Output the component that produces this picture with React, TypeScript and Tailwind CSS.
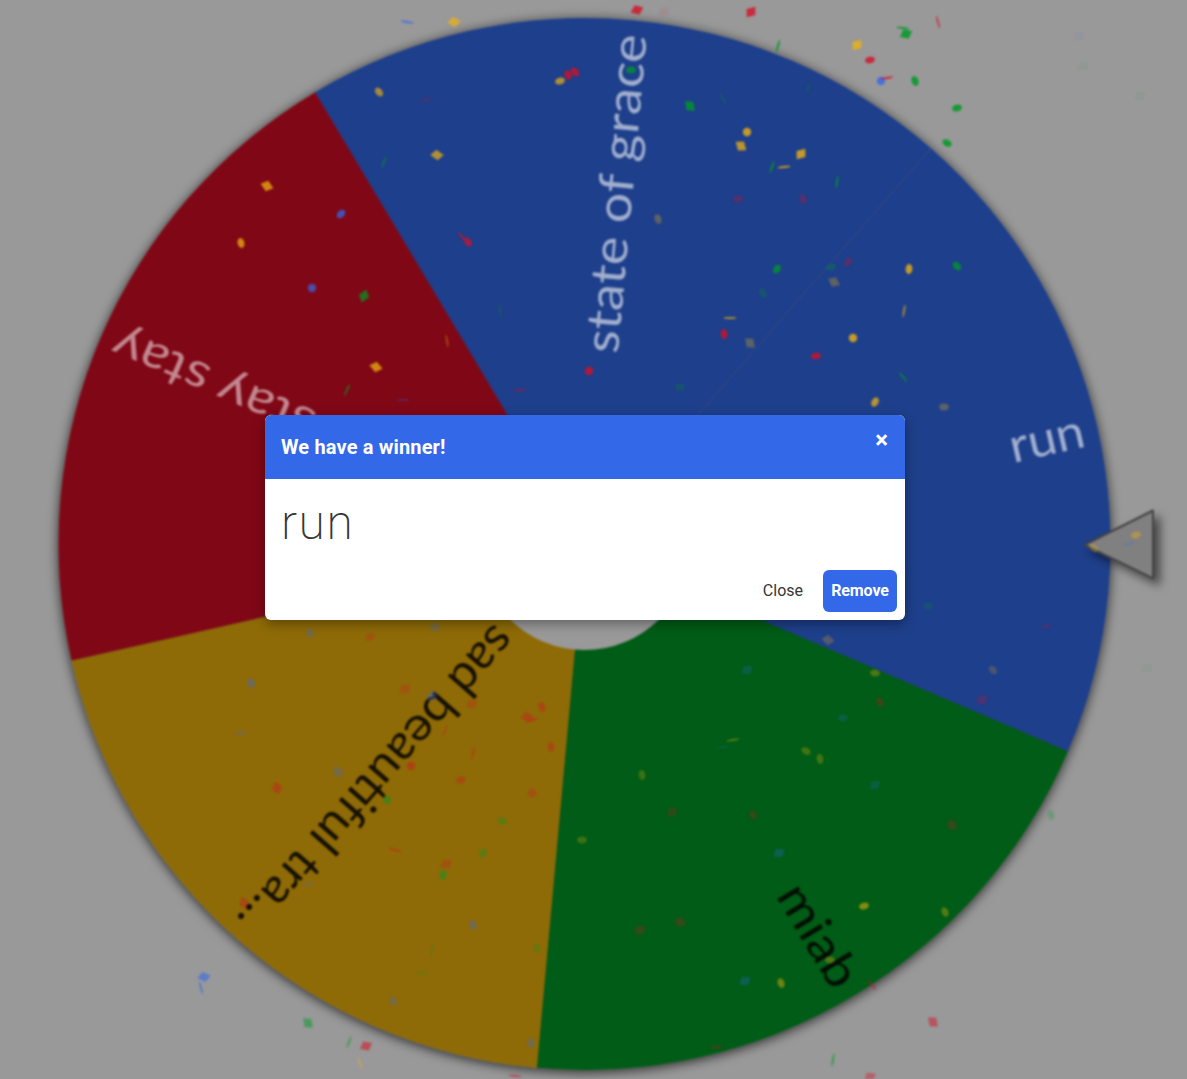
const cx = 584.5;
const cy = 544;
const R = 526;

type Slice = { from: number; color: string; ink: string; inkAlpha: number; label: string; len: number };
const slices: Slice[] = [
  { from: 23.2, color: "#009925", ink: "#000000", inkAlpha: 0.85, label: "miab", len: 112 },
  { from: 95.2, color: "#eeb211", ink: "#000000", inkAlpha: 0.85, label: "sad beautiful tra...", len: 394 },
  { from: 167.2, color: "#d50f25", ink: "#ffffff", inkAlpha: 0.52, label: "stay stay stay", len: 330 },
  { from: 239.2, color: "#3369e8", ink: "#ffffff", inkAlpha: 0.58, label: "state of grace", len: 320 },
  { from: 311.2, color: "#3369e8", ink: "#ffffff", inkAlpha: 0.58, label: "run", len: 76 },
];

function pt(a: number, r: number) {
  const t = (a * Math.PI) / 180;
  return `${(cx + r * Math.cos(t)).toFixed(2)} ${(cy + r * Math.sin(t)).toFixed(2)}`;
}

function wedge(a: number) {
  return `M${cx} ${cy}L${pt(a, R)}A${R} ${R} 0 0 1 ${pt(a + 72, R)}Z`;
}

const C: Record<string, string> = { r: "#d50f25", b: "#3369e8", y: "#eeb211", g: "#009925" };

// x, y, shape (e ellipse, c circle, s square, t thin), colour, alpha, angle
type Bit = [number, number, string, string, number, number];
const bits: Bit[] = [
  [407, 22, "t", "b", 0.8, 10], [454, 22, "s", "y", 0.7, 30], [637, 10, "s", "r", 0.8, 15], [751, 12, "s", "r", 0.8, -15],
  [664, 12, "s", "r", 0.08, 0], [778, 46, "t", "g", 0.85, -75], [857, 45, "s", "y", 0.8, -15], [870, 60, "e", "r", 0.8, -10],
  [881, 81, "c", "b", 0.8, 0], [887, 78, "t", "r", 0.85, -10], [915, 81, "e", "g", 0.85, 70], [903, 28, "t", "g", 0.85, 5],
  [906, 34, "s", "g", 0.85, 10], [938, 22, "t", "r", 0.6, 75], [957, 108, "e", "g", 0.85, -15], [947, 143, "e", "g", 0.85, 30],
  [204, 977, "s", "b", 0.6, 25], [201, 988, "t", "b", 0.6, 75], [308, 1023, "s", "g", 0.5, 80], [366, 1046, "s", "r", 0.55, 10],
  [349, 1042, "t", "g", 0.5, -70], [360, 1063, "t", "y", 0.4, 70], [933, 1022, "s", "r", 0.5, 80], [833, 1060, "t", "g", 0.6, -80],
  [872, 985, "t", "r", 0.5, 50], [515, 1076, "t", "r", 0.5, 5], [870, 1077, "s", "r", 0.4, 5], [1051, 815, "e", "g", 0.25, 80],
  [1079, 36, "s", "b", 0.07, 0], [1083, 66, "s", "g", 0.06, 0], [1140, 96, "s", "g", 0.05, 0],
  [560, 81, "e", "y", 0.7, -15], [568, 75, "e", "r", 0.8, 70], [575, 72, "e", "r", 0.8, 45], [631, 70, "e", "g", 0.75, 0],
  [690, 106, "s", "g", 0.8, 80], [723, 99, "t", "g", 0.3, 55], [808, 88, "t", "g", 0.25, -70], [747, 132, "c", "y", 0.8, 0],
  [741, 146, "s", "y", 0.75, 75], [801, 154, "s", "y", 0.8, -15], [772, 167, "t", "g", 0.8, -70], [784, 167, "t", "y", 0.8, -5],
  [837, 182, "t", "g", 0.75, -80], [738, 199, "e", "r", 0.3, 0], [803, 199, "e", "r", 0.3, 70], [658, 219, "e", "y", 0.3, 70],
  [777, 269, "e", "g", 0.75, -55], [831, 267, "e", "g", 0.3, -15], [848, 262, "e", "r", 0.3, -60], [834, 282, "s", "y", 0.3, 65],
  [909, 269, "e", "y", 0.8, -85], [957, 266, "e", "g", 0.75, 45], [763, 293, "e", "g", 0.25, 60], [904, 311, "t", "y", 0.6, -80],
  [730, 318, "t", "y", 0.7, 0], [724, 334, "e", "r", 0.8, 85], [750, 343, "s", "y", 0.3, 80], [853, 338, "c", "y", 0.8, 0],
  [816, 356, "e", "r", 0.8, -10], [589, 371, "c", "r", 0.8, 0], [903, 377, "t", "g", 0.65, 50], [875, 402, "e", "y", 0.75, -60],
  [944, 407, "e", "y", 0.3, 0], [680, 387, "e", "g", 0.25, 0], [500, 310, "t", "g", 0.3, 80],
  [379, 92, "e", "y", 0.65, 50], [426, 100, "t", "r", 0.3, -15], [437, 155, "s", "y", 0.7, 35], [384, 162, "t", "g", 0.5, -70],
  [462, 237, "t", "r", 0.7, 50], [468, 242, "e", "r", 0.7, 60], [267, 186, "s", "y", 0.75, 55], [341, 214, "e", "b", 0.75, -45],
  [241, 243, "e", "y", 0.75, 75], [312, 288, "c", "b", 0.7, 0], [364, 296, "s", "g", 0.7, -35], [376, 367, "s", "y", 0.75, 50],
  [447, 341, "t", "y", 0.35, 80], [347, 390, "t", "g", 0.6, -65], [520, 390, "t", "r", 0.5, -10], [403, 400, "t", "b", 0.3, 0],
  [310, 633, "e", "b", 0.3, 75], [370, 637, "e", "r", 0.25, -20], [435, 627, "c", "b", 0.28, 0], [251, 683, "e", "b", 0.4, 65],
  [405, 689, "s", "r", 0.25, -10], [432, 696, "s", "b", 0.35, -15], [472, 704, "s", "r", 0.25, 5], [527, 717, "s", "r", 0.35, 30],
  [532, 720, "t", "r", 0.55, -15], [241, 733, "t", "b", 0.4, -3], [445, 731, "t", "r", 0.3, -65], [473, 753, "t", "r", 0.4, -80],
  [411, 766, "c", "r", 0.45, 0], [338, 772, "s", "b", 0.28, 75], [461, 780, "e", "r", 0.35, -20], [277, 788, "s", "r", 0.4, -70],
  [387, 800, "c", "g", 0.45, 0], [532, 793, "c", "r", 0.28, 0], [502, 821, "e", "g", 0.35, 15], [395, 850, "t", "r", 0.45, 15],
  [483, 853, "e", "g", 0.35, -70], [446, 864, "s", "r", 0.28, 5], [443, 875, "e", "g", 0.5, -75], [308, 884, "t", "b", 0.3, -15],
  [244, 903, "s", "r", 0.35, -75], [473, 925, "e", "b", 0.35, 65], [542, 707, "e", "r", 0.4, 70], [551, 747, "e", "r", 0.35, 80],
  [432, 950, "t", "g", 0.25, -80], [537, 948, "e", "g", 0.25, 70], [422, 973, "t", "g", 0.28, -5], [393, 1001, "e", "b", 0.28, 65],
  [531, 1043, "e", "b", 0.32, 85],
  [642, 775, "e", "y", 0.25, 80], [733, 740, "t", "y", 0.4, -10], [723, 747, "t", "b", 0.2, -5], [806, 751, "e", "y", 0.28, 30],
  [820, 759, "e", "y", 0.28, 80], [880, 702, "e", "r", 0.28, 70], [875, 673, "e", "y", 0.32, 5], [747, 670, "s", "b", 0.22, 0],
  [828, 640, "s", "y", 0.25, 45], [843, 718, "e", "b", 0.22, 0], [875, 785, "s", "b", 0.2, 0], [753, 815, "e", "r", 0.25, 60],
  [672, 812, "s", "r", 0.2, 0], [582, 840, "e", "y", 0.25, 0], [952, 825, "s", "r", 0.25, 70], [779, 853, "s", "b", 0.28, 0],
  [864, 906, "e", "y", 0.55, -15], [945, 912, "e", "y", 0.35, 65], [640, 930, "s", "r", 0.25, 0], [680, 922, "s", "r", 0.25, 60],
  [830, 960, "e", "y", 0.32, 0], [781, 983, "e", "y", 0.45, 70], [745, 981, "s", "b", 0.28, 0], [716, 1047, "t", "r", 0.4, 0],
  [993, 670, "e", "y", 0.2, 45], [1047, 626, "t", "r", 0.3, -10], [982, 700, "s", "r", 0.25, 0], [928, 606, "e", "g", 0.2, 0],
  [1147, 668, "s", "g", 0.06, 0], [1136, 535, "e", "y", 0.4, -15], [1129, 544, "t", "b", 0.3, -15], [1094, 548, "e", "y", 0.28, 40],
];

function Bit({ b }: { b: Bit }) {
  const [x, y, shape, col, alpha, rot] = b;
  const common = { fill: C[col], fillOpacity: alpha };
  const turn = `rotate(${rot} ${x} ${y})`;
  if (shape === "c") return <circle cx={x} cy={y} r={4.2} {...common} />;
  if (shape === "e") return <ellipse cx={x} cy={y} rx={5} ry={3.4} transform={turn} {...common} />;
  if (shape === "s")
    return (
      <path
        d={`M${x - 5.5} ${y + 4}L${x - 3.5} ${y - 4}L${x + 5.5} ${y - 4}L${x + 3.5} ${y + 4}Z`}
        transform={turn}
        {...common}
      />
    );
  return <ellipse cx={x} cy={y} rx={6.5} ry={1.1} transform={turn} {...common} />;
}

export default function App() {
  return (
    <div className="relative h-[1079px] w-[1187px] overflow-hidden bg-white font-['Roboto',sans-serif]">
      <svg
        className="absolute left-0 top-0 blur-[1px]"
        width={1187}
        height={1079}
        viewBox="0 0 1187 1079"
      >
        <defs>
          <filter id="rim" x="-10%" y="-10%" width="120%" height="120%">
            <feDropShadow dx="0" dy="2" stdDeviation="6" floodColor="#000" floodOpacity="0.75" />
          </filter>
          <filter id="tip" x="-50%" y="-50%" width="200%" height="200%">
            <feDropShadow dx="6" dy="6" stdDeviation="5" floodColor="#000" floodOpacity="0.55" />
          </filter>
        </defs>
        <g filter="url(#rim)">
          {slices.map((s) => (
            <path key={s.from} d={wedge(s.from)} fill={s.color} />
          ))}
        </g>
        <path
          d={`M${pt(311.2, 0)}L${pt(311.2, R)}`}
          stroke="#ffffff"
          strokeOpacity={0.08}
          strokeWidth={1.5}
        />
        <circle cx={cx} cy={cy} r={106} fill="#ffffff" />
        <path
          d="M1084.5 545L1153 510.5V578.5Z"
          fill="#d6d6d6"
          stroke="#707070"
          strokeWidth={2}
          strokeLinejoin="round"
          filter="url(#tip)"
        />
      </svg>

      <div className="absolute inset-0 bg-black/40" />

      <svg
        className="absolute left-0 top-0 blur-[0.8px]"
        width={1187}
        height={1079}
        viewBox="0 0 1187 1079"
      >
        {slices.map((s) => (
          <text
            key={s.label}
            transform={`rotate(${s.from + 36} ${cx} ${cy})`}
            x={cx + 512}
            y={cy + 16}
            textAnchor="end"
            fontFamily="Lato, sans-serif"
            fontSize={48}
            fill={s.ink}
            fillOpacity={s.inkAlpha}
            textLength={s.len}
            lengthAdjust="spacingAndGlyphs"
          >
            {s.label}
          </text>
        ))}
        {bits.map((b, i) => (
          <Bit key={i} b={b} />
        ))}
      </svg>

      <div className="absolute inset-0 flex items-start justify-center pt-[415px] pr-[17px]">
        <div className="flex w-[640px] flex-col overflow-hidden rounded-[6px] bg-white shadow-[0_4px_12px_rgba(0,0,0,0.35)]">
          <div className="relative flex h-16 items-center bg-[#3369e8] px-4">
            <span className="text-[20px] font-bold tracking-[0.15px] text-white">We have a winner!</span>
            <span className="absolute right-[17px] top-[13px] text-[24px] leading-6 font-bold text-white">
              ×
            </span>
          </div>
          <div className="h-[91px] px-4 pt-[14px]">
            <div className="text-[48px] leading-[60px] font-extralight tracking-[1.5px] text-[#363636]">run</div>
          </div>
          <div className="flex h-[50px] items-start justify-end gap-[20px] pr-2">
            <span className="mt-[10px] text-[16px] leading-[22px] text-[#363636]">Close</span>
            <button className="flex h-[42px] w-[74px] items-center justify-center rounded-[6px] bg-[#3369e8] text-[16px] font-bold tracking-[-0.1px] text-white">
              Remove
            </button>
          </div>
        </div>
      </div>
    </div>
  );
}
